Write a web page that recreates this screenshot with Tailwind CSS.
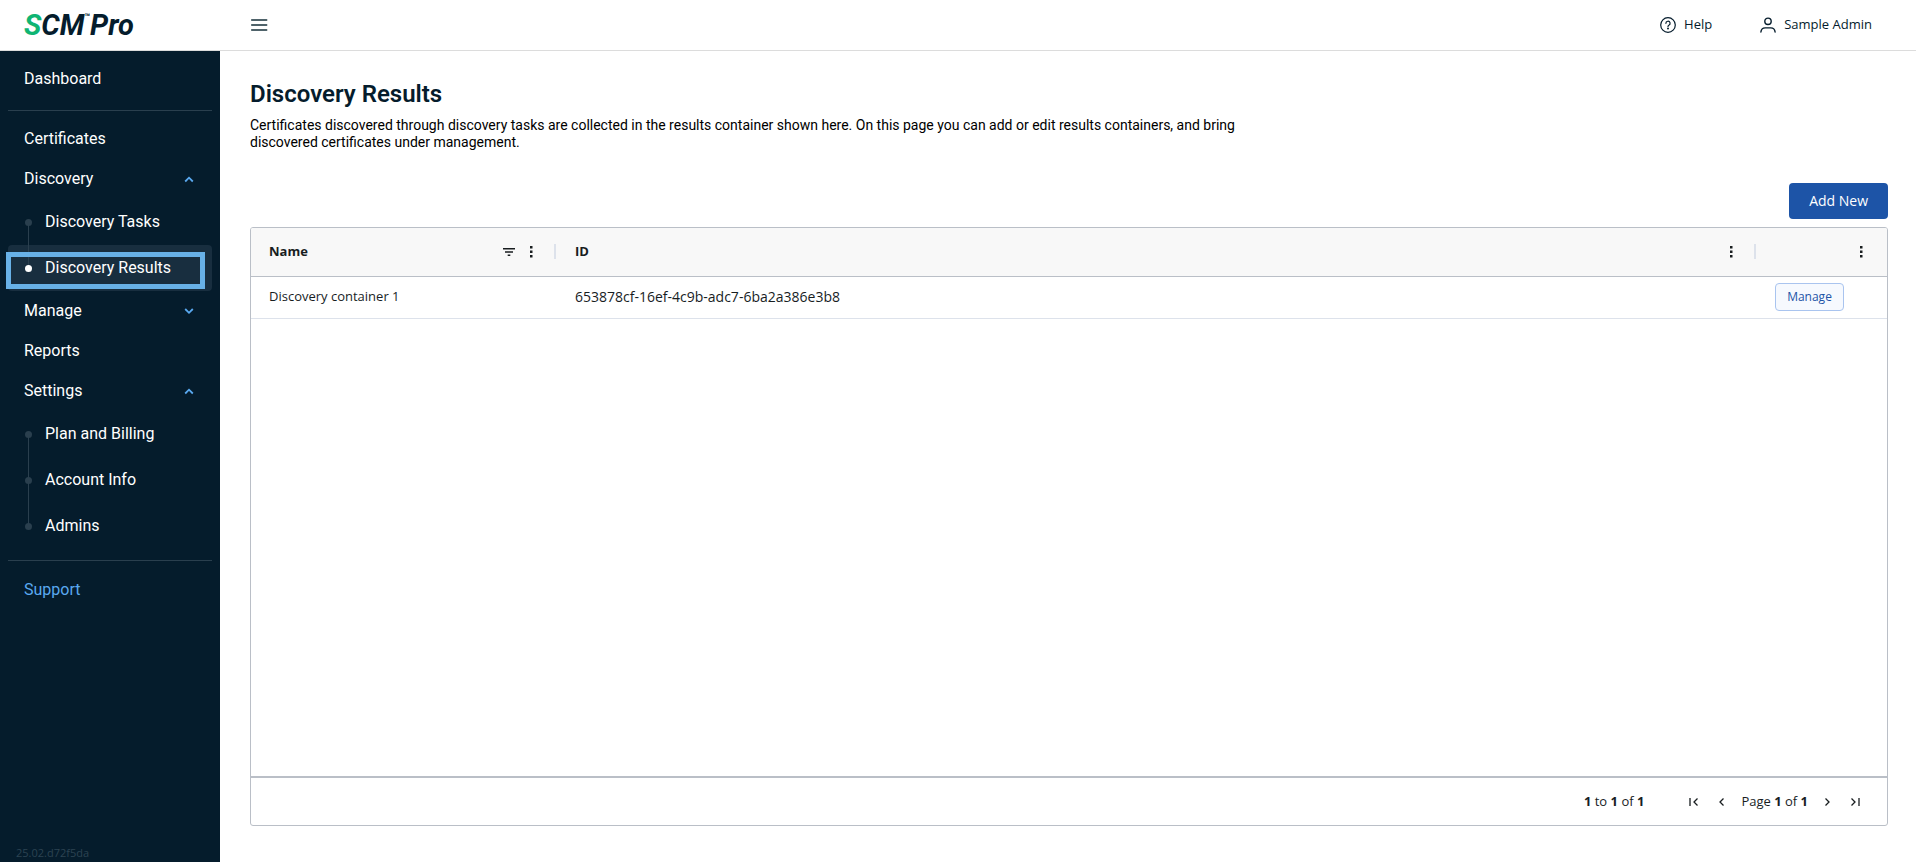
<!DOCTYPE html>
<html lang="en">
<head>
  <meta charset="UTF-8" />
  <meta name="viewport" content="width=device-width, initial-scale=1" />
  <title>SCM Pro - Discovery Results</title>
  <script src="https://cdn.jsdelivr.net/npm/@tailwindcss/browser@4"></script>
</head>
<body class="flex min-h-screen flex-col bg-white font-['Roboto',sans-serif] text-[#051c2c]">

  <!-- Top bar -->
  <header class="flex h-[51px] items-center border-b border-[#dcdcdc] pr-11">
    <a href="#" aria-label="SCM Pro" class="flex w-[220px] shrink-0 items-center pl-6 font-['Liberation_Sans_Narrow','Roboto',sans-serif] text-[29px] leading-none font-bold italic">
      <span class="text-[#0fb573]">S</span><span>CM</span><span class="self-start text-[9px] leading-3 not-italic">™</span><span>Pro</span>
    </a>
    <button type="button" aria-label="Toggle menu" class="ml-[30px]">
      <svg class="h-4 w-[18px]" viewBox="0 0 18 16" fill="none" stroke="#16303a" stroke-width="1.5" stroke-linecap="round"><path d="M1.7 3h15M1.7 8h15M1.7 13h15" /></svg>
    </button>
    <div class="ml-auto flex items-center gap-12 font-['Open_Sans',sans-serif] text-[13px]">
      <a href="#" class="flex items-center gap-2">
        <svg class="size-4" viewBox="0 0 16 16" fill="none" stroke="currentColor" stroke-width="1.2" stroke-linecap="round"><circle cx="8" cy="8" r="7.3" /><path d="M5.9 6.3a2.1 2.1 0 1 1 3 1.900c-.6.3-.9.6-.9 1.300" /><circle cx="8" cy="11.4" r=".4" fill="currentColor" /></svg>
        Help
      </a>
      <button type="button" class="flex items-center gap-2">
        <svg class="size-4" viewBox="0 0 16 16" fill="none" stroke="currentColor" stroke-width="1.4" stroke-linecap="round"><circle cx="8" cy="4.3" r="3.2" /><path d="M.9 15c.3-2.900 2.200-4.100 4.300-4.100h5.600c2.100 0 4 1.200 4.300 4.100" /></svg>
        Sample Admin
      </button>
    </div>
  </header>

  <div class="flex flex-1">

    <!-- Sidebar -->
    <aside class="flex w-[220px] shrink-0 flex-col bg-[#051c2c] px-2 pt-2 text-base text-white">
      <nav>
        <a href="#" class="flex h-10 items-center px-4">Dashboard</a>
        <hr class="mt-[11px] mb-2 border-[#2a3f4e]" />
        <a href="#" class="flex h-10 items-center px-4">Certificates</a>
        <button type="button" class="flex h-10 w-full items-center justify-between px-4">
          Discovery
          <svg class="mr-0.5 h-2 w-2.5" viewBox="0 0 10 8" fill="none" stroke="#5aa9f0" stroke-width="1.8"><path d="M1.200 6.500L5 2.700l3.800 3.800" /></svg>
        </button>
        <ul>
          <li class="relative">
            <a href="#" class="flex h-[46px] items-center gap-[13px] pl-[17px]"><span class="size-[7px] rounded-full bg-[#2a3f4e]"></span>Discovery Tasks</a>
            <span class="absolute top-[23px] left-5 h-[46px] w-px bg-[#2a3f4e]"></span>
          </li>
          <li class="relative">
            <a href="#" class="flex h-[46px] items-center gap-[13px] rounded bg-[#182e3f] pl-[17px]"><span class="relative z-10 size-[7px] rounded-full bg-white"></span>Discovery Results</a>
            <span class="absolute top-0 left-5 h-[23px] w-px bg-[#2a3f4e]"></span>
            <!-- Highlight frame -->
            <span class="absolute top-[7px] -left-0.5 h-[37px] w-[199px] border-5 border-[#68b1e7]"></span>
          </li>
        </ul>
        <button type="button" class="flex h-10 w-full items-center justify-between px-4">
          Manage
          <svg class="mr-0.5 h-2 w-2.5" viewBox="0 0 10 8" fill="none" stroke="#5aa9f0" stroke-width="1.8"><path d="M1.200 2L5 5.800 8.800 2" /></svg>
        </button>
        <a href="#" class="flex h-10 items-center px-4">Reports</a>
        <button type="button" class="flex h-10 w-full items-center justify-between px-4">
          Settings
          <svg class="mr-0.5 h-2 w-2.5" viewBox="0 0 10 8" fill="none" stroke="#5aa9f0" stroke-width="1.8"><path d="M1.200 6.500L5 2.700l3.800 3.800" /></svg>
        </button>
        <ul>
          <li class="relative">
            <a href="#" class="flex h-[46px] items-center gap-[13px] pl-[17px]"><span class="size-[7px] rounded-full bg-[#2a3f4e]"></span>Plan and Billing</a>
            <span class="absolute top-[23px] left-5 h-[92px] w-px bg-[#2a3f4e]"></span>
          </li>
          <li><a href="#" class="flex h-[46px] items-center gap-[13px] pl-[17px]"><span class="size-[7px] rounded-full bg-[#2a3f4e]"></span>Account Info</a></li>
          <li><a href="#" class="flex h-[46px] items-center gap-[13px] pl-[17px]"><span class="size-[7px] rounded-full bg-[#2a3f4e]"></span>Admins</a></li>
        </ul>
        <hr class="mt-[11px] mb-[9px] border-[#2a3f4e]" />
        <a href="#" class="flex h-10 items-center px-4 text-[#5aa9f0]">Support</a>
      </nav>
      <p class="mt-auto pl-2 font-['Open_Sans',sans-serif] text-[11px] leading-[18px] text-[#2c4352]">25.02.d72f5da</p>
    </aside>

    <!-- Content -->
    <main class="flex min-w-0 flex-1 flex-col pt-[27px] pr-7 pb-9 pl-[30px]">
      <h1 class="text-2xl leading-8 font-semibold">Discovery Results</h1>
      <p class="mt-[7px] max-w-[1000px] text-sm leading-[17px] text-black">Certificates discovered through discovery tasks are collected in the results container shown here. On this page you can add or edit results containers, and bring discovered certificates under management.</p>
      <button type="button" class="mt-8 h-9 self-end rounded bg-[#1d54a7] px-5 font-['Open_Sans',sans-serif] text-sm text-white">Add New</button>

      <section class="mt-2 flex flex-1 flex-col overflow-hidden rounded-[3px] border border-[#babfc7] font-['Open_Sans',sans-serif] text-[13px] text-[#181d1f]">
        <table class="w-full table-fixed text-left">
          <thead>
            <tr class="h-12 border-b border-[#babfc7] bg-[#f8f8f8]">
              <th class="w-[305px] pl-[18px]">
                <div class="flex items-center">
                  Name
                  <svg class="ml-auto h-3 w-3" viewBox="0 0 12 12" fill="none" stroke="#181d1f" stroke-width="1.4"><path d="M0 2.700h12M2 6h8M4.700 9.300h2.600" /></svg>
                  <svg class="mx-[15px] h-3 w-[3px]" viewBox="0 0 3 12" fill="#181d1f"><path d="M0 0h2.500v2.500H0zM0 4.500h2.500V7H0zM0 9h2.500v2.500H0z" /></svg>
                  <span class="ml-1.5 h-[15px] w-0.5 bg-[#dde2eb]"></span>
                </div>
              </th>
              <th class="pl-[19px]">
                <div class="flex items-center">
                  ID
                  <svg class="mr-[21px] ml-auto h-3 w-[3px]" viewBox="0 0 3 12" fill="#181d1f"><path d="M0 0h2.500v2.500H0zM0 4.500h2.500V7H0zM0 9h2.500v2.500H0z" /></svg>
                  <span class="h-[15px] w-0.5 bg-[#dde2eb]"></span>
                </div>
              </th>
              <th class="w-[131px] pr-6"><svg class="ml-auto h-3 w-[3px]" viewBox="0 0 3 12" fill="#181d1f"><path d="M0 0h2.500v2.500H0zM0 4.500h2.500V7H0zM0 9h2.500v2.500H0z" /></svg></th>
            </tr>
          </thead>
          <tbody>
            <tr class="h-[42px] border-b border-[#dde2eb]">
              <td class="pl-[18px]">Discovery container 1</td>
              <td class="pl-[19px] text-sm">653878cf-16ef-4c9b-adc7-6ba2a386e3b8</td>
              <td class="pl-[19px]"><button type="button" class="block h-7 w-[69px] rounded border border-[#a9c4ef] bg-[#f6f9fe] text-xs text-[#1d54a7]">Manage</button></td>
            </tr>
          </tbody>
        </table>

        <!-- Pagination -->
        <div class="mt-auto flex h-[49px] items-center justify-end border-t-2 border-[#babfc7] pr-[27px]">
          <span class="mr-[45px]"><b>1</b> to <b>1</b> of <b>1</b></span>
          <button type="button" aria-label="First page"><svg class="size-[10px]" viewBox="0 0 10 10" fill="none" stroke="#181d1f" stroke-width="1.300"><path d="M1 1v8M8.500 1.500L5 5l3.500 3.500" /></svg></button>
          <button type="button" aria-label="Previous page" class="ml-[18px]"><svg class="size-[10px]" viewBox="0 0 10 10" fill="none" stroke="#181d1f" stroke-width="1.300"><path d="M6.500 1.500L3 5l3.500 3.500" /></svg></button>
          <span class="mx-3.5">Page <b>1</b> of <b>1</b></span>
          <button type="button" aria-label="Next page" class="mr-[18px]"><svg class="size-[10px]" viewBox="0 0 10 10" fill="none" stroke="#181d1f" stroke-width="1.300"><path d="M3.500 1.500L7 5 3.500 8.500" /></svg></button>
          <button type="button" aria-label="Last page"><svg class="size-[10px]" viewBox="0 0 10 10" fill="none" stroke="#181d1f" stroke-width="1.300"><path d="M9 1v8M1.500 1.500L5 5 1.500 8.500" /></svg></button>
        </div>
      </section>
    </main>
  </div>

</body>
</html>
